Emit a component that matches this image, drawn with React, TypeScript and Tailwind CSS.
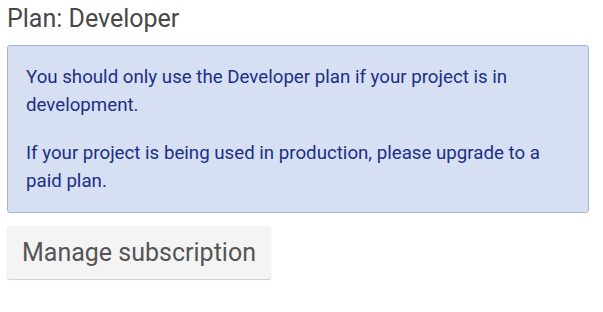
export default function App() {
  return (
    <div className="bg-white px-[7px] pt-[2px] font-['Roboto',sans-serif]" style={{ width: 603, height: 312 }}>
      <h2 className="text-[25px] leading-[34px] text-[#484848]">Plan: Developer</h2>
      <div className="mt-[9px] w-[582px] rounded-[3px] border border-[#a3b6da] bg-[#d6e0f2] px-[18px] py-[17px] text-[18.7px] leading-[28px] text-[#1c2f86]">
        <p>You should only use the Developer plan if your project is in development.</p>
        <p className="mt-[20px]">If your project is being used in production, please upgrade to a paid plan.</p>
      </div>
      <button className="mt-[13px] h-[53px] rounded-[3px] bg-[#f4f4f4] px-[15px] text-[25px] text-[#555] shadow-[0_1px_1px_rgba(0,0,0,0.2)]">
        Manage subscription
      </button>
    </div>
  );
}
